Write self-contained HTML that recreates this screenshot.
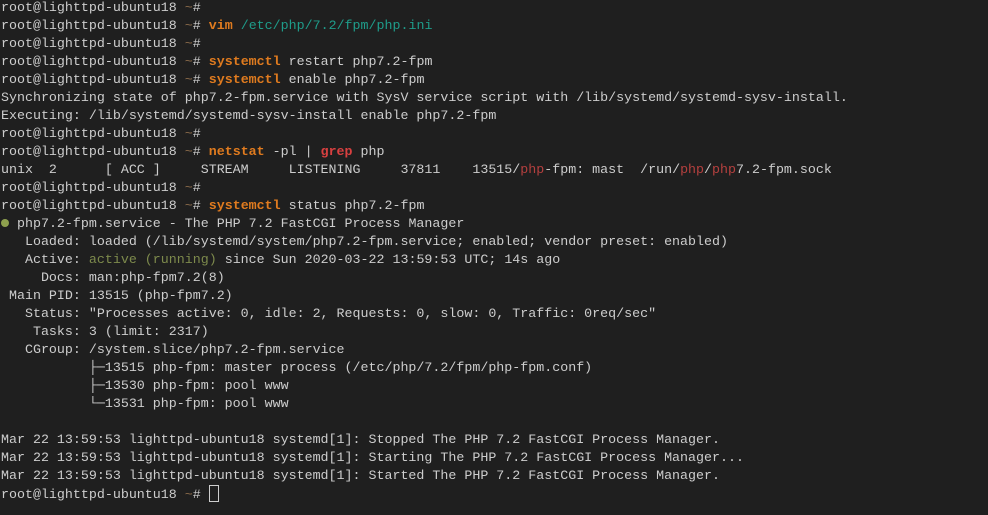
<!DOCTYPE html>
<html><head><meta charset="utf-8"><style>
html,body{margin:0;padding:0;background:#1f1f1f;width:988px;height:515px;overflow:hidden}
pre{position:absolute;left:1px;top:-1px;margin:0;font-family:"Liberation Mono","DejaVu Sans Mono",monospace;font-size:13.32px;line-height:18px;color:#cdcdcd;white-space:pre}
pre span{line-height:18px}
.o{color:#e07b1f;font-weight:bold}.t{color:#1f9c8a}.r{color:#b5403f}.g{color:#7d8a4c}.d{color:#8a6a4a}.b{color:#d94040;font-weight:bold}
.c{display:inline-block;width:8px;height:15px;border:1px solid #cdcdcd;vertical-align:-4px;line-height:0}
.dot{display:inline-block;width:8px;height:8px;border-radius:50%;background:#8ea04e;vertical-align:0px;line-height:0}
</style></head><body><pre>root@lighttpd-ubuntu18 <span class="d">~</span># 
root@lighttpd-ubuntu18 <span class="d">~</span># <span class="o">vim</span> <span class="t">/etc/php/7.2/fpm/php.ini</span>
root@lighttpd-ubuntu18 <span class="d">~</span># 
root@lighttpd-ubuntu18 <span class="d">~</span># <span class="o">systemctl</span> restart php7.2-fpm
root@lighttpd-ubuntu18 <span class="d">~</span># <span class="o">systemctl</span> enable php7.2-fpm
Synchronizing state of php7.2-fpm.service with SysV service script with /lib/systemd/systemd-sysv-install.
Executing: /lib/systemd/systemd-sysv-install enable php7.2-fpm
root@lighttpd-ubuntu18 <span class="d">~</span># 
root@lighttpd-ubuntu18 <span class="d">~</span># <span class="o">netstat</span> -pl | <span class="b">grep</span> php
unix  2      [ ACC ]     STREAM     LISTENING     37811    13515/<span class="r">php</span>-fpm: mast  /run/<span class="r">php</span>/<span class="r">php</span>7.2-fpm.sock
root@lighttpd-ubuntu18 <span class="d">~</span># 
root@lighttpd-ubuntu18 <span class="d">~</span># <span class="o">systemctl</span> status php7.2-fpm
<span class="dot"></span> php7.2-fpm.service - The PHP 7.2 FastCGI Process Manager
   Loaded: loaded (/lib/systemd/system/php7.2-fpm.service; enabled; vendor preset: enabled)
   Active: <span class="g">active (running)</span> since Sun 2020-03-22 13:59:53 UTC; 14s ago
     Docs: man:php-fpm7.2(8)
 Main PID: 13515 (php-fpm7.2)
   Status: "Processes active: 0, idle: 2, Requests: 0, slow: 0, Traffic: 0req/sec"
    Tasks: 3 (limit: 2317)
   CGroup: /system.slice/php7.2-fpm.service
           ├─13515 php-fpm: master process (/etc/php/7.2/fpm/php-fpm.conf)
           ├─13530 php-fpm: pool www
           └─13531 php-fpm: pool www

Mar 22 13:59:53 lighttpd-ubuntu18 systemd[1]: Stopped The PHP 7.2 FastCGI Process Manager.
Mar 22 13:59:53 lighttpd-ubuntu18 systemd[1]: Starting The PHP 7.2 FastCGI Process Manager...
Mar 22 13:59:53 lighttpd-ubuntu18 systemd[1]: Started The PHP 7.2 FastCGI Process Manager.
root@lighttpd-ubuntu18 <span class="d">~</span># <span class="c"></span></pre></body></html>
